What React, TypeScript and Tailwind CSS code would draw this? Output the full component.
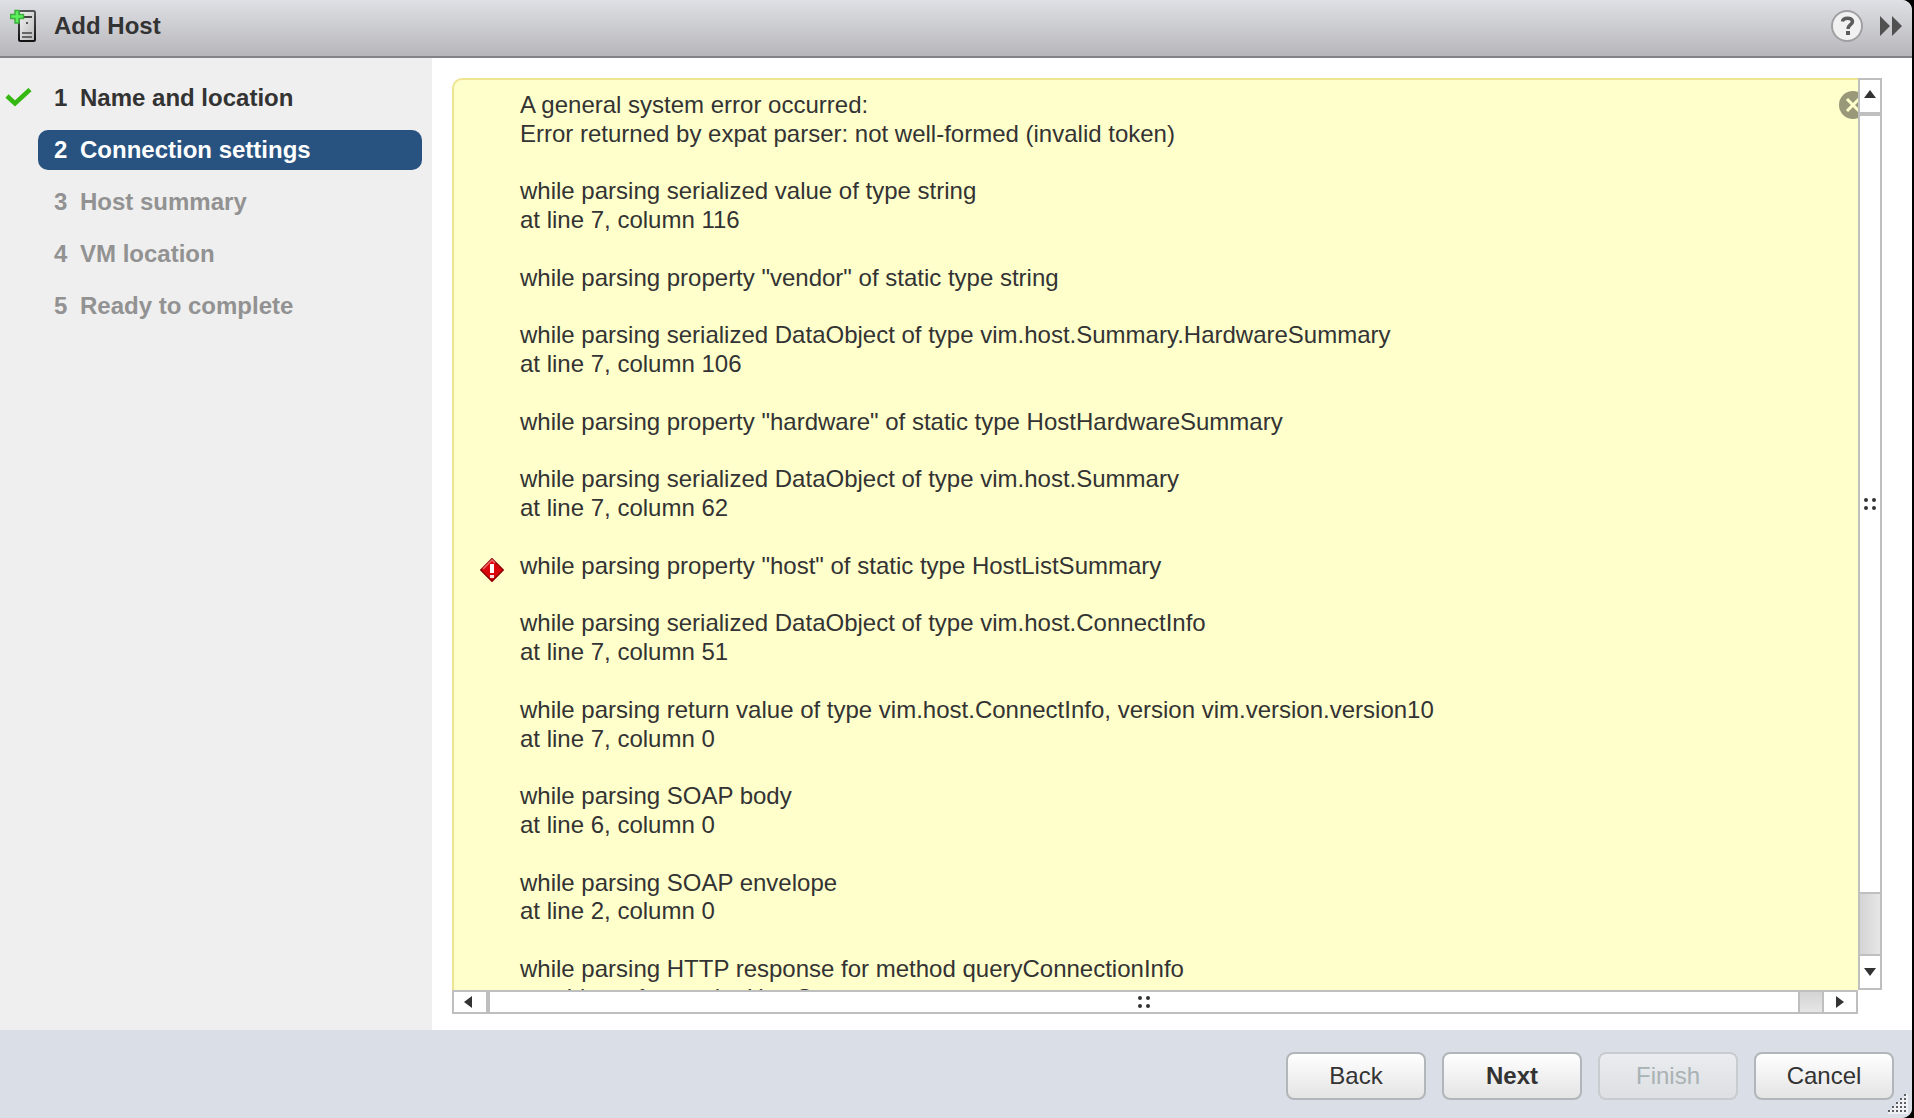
import React, { useState } from "react";

interface StepProps {
    num: number
    label: string
    current: number
    done?: boolean
}

const steps: string[] = ["Name and location", "Connection settings", "Host summary", "VM location", "Ready to complete"];

const errorText: string = `A general system error occurred:
Error returned by expat parser: not well-formed (invalid token)

while parsing serialized value of type string
at line 7, column 116

while parsing property "vendor" of static type string

while parsing serialized DataObject of type vim.host.Summary.HardwareSummary
at line 7, column 106

while parsing property "hardware" of static type HostHardwareSummary

while parsing serialized DataObject of type vim.host.Summary
at line 7, column 62

while parsing property "host" of static type HostListSummary

while parsing serialized DataObject of type vim.host.ConnectInfo
at line 7, column 51

while parsing return value of type vim.host.ConnectInfo, version vim.version.version10
at line 7, column 0

while parsing SOAP body
at line 6, column 0

while parsing SOAP envelope
at line 2, column 0

while parsing HTTP response for method queryConnectionInfo
on object of type vim.HostSystem`;

const HostIcon = () => (
    <svg width="28" height="34" viewBox="0 0 28 34" aria-hidden="true">
        <defs>
            <linearGradient id="case" x1="0" y1="0" x2="1" y2="1">
                <stop offset="0" stopColor="#f4f4f4" />
                <stop offset="1" stopColor="#b9b9b9" />
            </linearGradient>
            <linearGradient id="edge" x1="0" y1="0" x2="0" y2="1">
                <stop offset="0" stopColor="#555555" />
                <stop offset="1" stopColor="#111111" />
            </linearGradient>
        </defs>
        <rect x="9" y="2" width="16" height="30" rx="1.5" fill="url(#case)" stroke="url(#edge)" strokeWidth="2" />
        <path d="M14 8h8" stroke="#444" strokeWidth="2" />
        <path d="M16 14h2" stroke="#555" strokeWidth="2" />
        <path d="M12 24h10M12 28h10" stroke="#666" strokeWidth="2" />
        <path d="M5 1.500h4v4h4.500v4h-4.500v4.500h-4v-4.500h-4.500v-4h4.500z" fill="#5cf05c" stroke="#3fae3f" strokeWidth="1.5" />
    </svg>
);

const CheckIcon = () => (
    <svg width="28" height="20" viewBox="0 0 28 20" aria-hidden="true">
        <path d="M2 8L10 15.500L25 1.500" fill="none" stroke="#35b812" strokeWidth="4.500" />
    </svg>
);

const ErrorIcon = () => (
    <svg width="24" height="24" viewBox="0 0 24 24" className="shrink-0" role="img" aria-label="Error">
        <path d="M12 0.700L23.300 12L12 23.300L0.700 12Z" fill="#d9040c" stroke="#8b0006" strokeWidth="1.500" />
        <path d="M3 11L12 2L15 5" fill="none" stroke="#f3696c" strokeWidth="1.500" />
        <path d="M10 6h4v9h-4z" fill="#fff" />
        <path d="M10 17h4v3h-4z" fill="#fbdcdc" />
    </svg>
);

const Grip = () => (
    <svg width="14" height="14" viewBox="0 0 14 14" aria-hidden="true" fill="#333">
        <circle cx="3" cy="3" r="2" />
        <circle cx="11" cy="3" r="2" />
        <circle cx="3" cy="11" r="2" />
        <circle cx="11" cy="11" r="2" />
    </svg>
);

const ResizeDots = () => {
    const dots = [];
    for (let r = 0; r < 5; r++) {
        for (let c = 4 - r; c < 5; c++) {
            dots.push(<rect key={r + "-" + c + "l"} x={c * 4} y={r * 4} width="4" height="4" fill="#f0f1f4" />);
            dots.push(<rect key={r + "-" + c} x={c * 4} y={r * 4} width="2" height="2" fill="#5c5e62" />);
        }
    }
    return <svg width="20" height="20" viewBox="0 0 20 20" aria-hidden="true">{dots}</svg>;
};

const Step = (props: StepProps) => {
    const active = props.num === props.current;
    const color = active ? "bg-[#285381] text-white" : props.done ? "text-[#333]" : "text-[#929292]";

    return <li className="flex items-center">
        <div className="w-[38px] pl-[5px]">
            {props.done && <CheckIcon />}
        </div>
        <div className={"flex h-10 flex-1 items-center rounded-[10px] pl-4 " + color}>
            <span className="w-[26px]">{props.num}</span>
            <span>{props.label}</span>
        </div>
    </li>
}

const footerButton = "h-12 w-[140px] rounded-lg border-2 border-[#b2b5b9] bg-linear-to-b from-white to-[#e4e4e4]";

export default function App() {
    const [current, setCurrent] = useState(2);

    return <div className="h-screen bg-black pr-[2px] font-['Liberation_Sans',Arial,sans-serif] text-[24px] leading-[1.2] text-[#333]">
        <div className="flex h-full flex-col overflow-hidden rounded-r-[10px] bg-white">
            <header className="flex h-[58px] shrink-0 items-center border-b-2 border-[#838287] bg-linear-to-b from-[#dfe0e5] to-[#b7b7bb] pb-1 pl-[10px] pr-[10px]">
                <HostIcon />
                <h1 className="flex-1 pl-4 font-bold">Add Host</h1>
                <button aria-label="Help" className="mr-4">
                    <svg width="34" height="34" viewBox="0 0 34 34">
                        <circle cx="17" cy="17" r="15" fill="#f1f1f2" stroke="#a0a0a3" strokeWidth="2" />
                        <path d="M12.500 12.500C13 8 22.500 8 22.500 12.500C22.500 16 18 15.500 18 20" fill="none" stroke="#5c5c5c" strokeWidth="3.500" />
                        <rect x="16" y="22" width="4" height="4" fill="#5c5c5c" />
                    </svg>
                </button>
                <button aria-label="More">
                    <svg width="22" height="20" viewBox="0 0 22 20" fill="#505050">
                        <path d="M0 0L10 10L0 20zM12 0L22 10L12 20z" />
                    </svg>
                </button>
            </header>

            <div className="flex min-h-0 flex-1">
                <nav className="w-[432px] shrink-0 bg-[#efefef] pr-[10px] pt-5">
                    <ol className="flex flex-col gap-3 font-bold">
                        {steps.map((s, i) => <Step key={s} num={i + 1} label={s} current={current} done={i + 1 < current} />)}
                    </ol>
                </nav>

                <main className="grid min-w-0 flex-1 grid-cols-[minmax(0,1fr)_24px] grid-rows-[minmax(0,1fr)_24px] pb-4 pl-5 pr-[30px] pt-5">
                    <div className="relative overflow-hidden rounded-tl-[10px] border-l-2 border-t-2 border-[#ede592] bg-[#ffffcc]">
                        <div className="flex items-center pl-[26px] pt-[11px]">
                            <ErrorIcon />
                            <p className="whitespace-pre pb-9 pl-4">{errorText}</p>
                        </div>
                        <button aria-label="Close" className="absolute right-[-9px] top-[11px]">
                            <svg width="28" height="28" viewBox="0 0 28 28">
                                <circle cx="14" cy="14" r="14" fill="#99997a" />
                                <path d="M8 8L20 20M20 8L8 20" stroke="#ffffcc" strokeWidth="3" />
                            </svg>
                        </button>
                    </div>

                    <div className="flex flex-col border-2 border-[#bfbfbf] bg-linear-to-r from-[#d4d4d4] to-[#e6e6e6]">
                        <button aria-label="Scroll up" className="flex h-8 items-center justify-center bg-white pb-1">
                            <svg width="12" height="8" viewBox="0 0 12 8" fill="#333"><path d="M6 0L12 8H0z" /></svg>
                        </button>
                        <div className="flex flex-1 items-center justify-center border-b-2 border-t-4 border-[#bfbfbf] bg-white">
                            <Grip />
                        </div>
                        <button aria-label="Scroll down" className="mt-[60px] flex h-[34px] items-center justify-center border-t-2 border-[#bfbfbf] bg-white">
                            <svg width="12" height="8" viewBox="0 0 12 8" fill="#333"><path d="M0 0H12L6 8z" /></svg>
                        </button>
                    </div>

                    <div className="flex border-2 border-[#bfbfbf] bg-linear-to-b from-[#d4d4d4] to-[#e6e6e6]">
                        <button aria-label="Scroll left" className="flex w-8 items-center justify-center bg-white pr-1">
                            <svg width="8" height="12" viewBox="0 0 8 12" fill="#333"><path d="M8 0V12L0 6z" /></svg>
                        </button>
                        <div className="flex flex-1 items-center justify-center border-l-4 border-r-2 border-[#bfbfbf] bg-white">
                            <Grip />
                        </div>
                        <button aria-label="Scroll right" className="ml-[22px] flex w-[34px] items-center justify-center border-l-2 border-[#bfbfbf] bg-white">
                            <svg width="8" height="12" viewBox="0 0 8 12" fill="#333"><path d="M0 0L8 6L0 12z" /></svg>
                        </button>
                    </div>
                </main>
            </div>

            <footer className="relative flex h-[88px] shrink-0 items-center justify-end gap-4 bg-[#dadee6] pl-4 pr-[18px] pt-1">
                <button className={footerButton} onClick={() => setCurrent(Math.max(1, current - 1))}>Back</button>
                <button className={footerButton + " font-bold"} onClick={() => setCurrent(Math.min(5, current + 1))}>Next</button>
                <button disabled className="h-12 w-[140px] rounded-lg border-2 border-[#c8cbcf] bg-linear-to-b from-[#eaecef] to-[#dde0e3] text-[#a9b2b4]">Finish</button>
                <button className={footerButton}>Cancel</button>
                <div className="absolute bottom-1 right-1">
                    <ResizeDots />
                </div>
            </footer>
        </div>
    </div>
}
